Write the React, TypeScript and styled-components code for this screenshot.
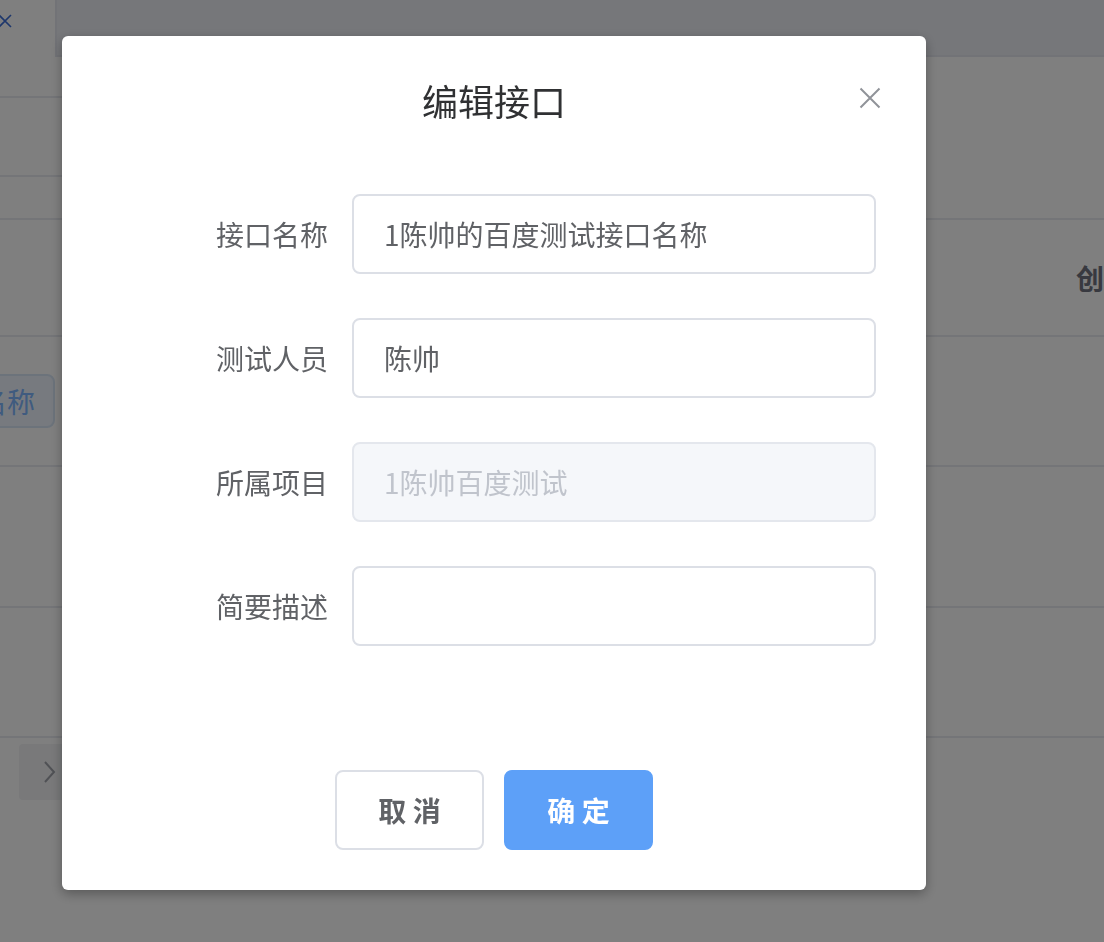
import React from 'react';
import styled, { createGlobalStyle } from 'styled-components';

const GlobalStyle = createGlobalStyle`
  html, body {
    margin: 0;
    padding: 0;
    height: 100%;
    overflow: hidden;
    background: #ffffff;
    font-family: "Noto Sans CJK SC", "Noto Sans", "Liberation Sans", sans-serif;
  }
  * { box-sizing: border-box; }
`;

/* ---------- page underneath the mask ---------- */

const Page = styled.div`
  width: 100%;
  height: 942px;
  background: #ffffff;
  overflow: hidden;
`;

const TabBar = styled.div`
  display: flex;
  height: 57px;
  background: #eceef4;
  border-bottom: 2px solid #e4e6ee;
`;

const Tab = styled.div<{ active?: boolean }>`
  width: 57px;
  height: 57px;
  display: flex;
  align-items: flex-start;
  padding-top: 14px;
  background: ${p => (p.active ? '#ffffff' : 'transparent')};
  border-right: 2px solid #e4e6ee;
  color: #3d6fd8;
`;

const FilterBlock = styled.div`
  width: 420px;
  display: flex;
  flex-direction: column;
`;

const FilterRow = styled.div<{ h: number; line?: boolean }>`
  height: ${p => p.h}px;
  border-bottom: ${p => (p.line ? '2px solid #e8eaf0' : 'none')};
`;

const TableRow = styled.div<{ h: number; top?: boolean }>`
  height: ${p => p.h}px;
  display: grid;
  grid-template-columns: 1076px 200px;
  align-items: center;
  border-top: ${p => (p.top ? '2px solid #e8eaf0' : 'none')};
  border-bottom: 2px solid #e8eaf0;
  white-space: nowrap;
`;

const HeadCell = styled.div`
  font-size: 28px;
  font-weight: 700;
  color: #707380;
`;

const RowCell = styled.div`
  display: flex;
  align-items: center;
`;

const PlainButton = styled.div`
  height: 54px;
  margin-left: -53px;
  padding: 0 18px 0 30px;
  display: flex;
  align-items: center;
  border: 2px solid #d9e6f7;
  border-radius: 8px;
  background: #eef5ff;
  color: #7eb6ff;
  font-size: 28px;
`;

const Pager = styled.div`
  display: flex;
  padding: 6px 0 0 19px;
`;

const PagerButton = styled.div`
  width: 62px;
  height: 56px;
  border-radius: 4px;
  background: #f2f3f5;
  display: flex;
  align-items: center;
  justify-content: center;
  color: #a0a3aa;
`;

/* ---------- dialog ---------- */

const Mask = styled.div`
  position: fixed;
  inset: 0;
  background: rgba(0, 0, 0, 0.5);
`;

const Dialog = styled.div`
  position: relative;
  width: 864px;
  margin: 36px 0 0 62px;
  background: #ffffff;
  border-radius: 6px;
  box-shadow: 0 4px 12px rgba(0, 0, 0, 0.3);
`;

const Header = styled.div`
  padding: 40px 40px 20px;
  text-align: center;
`;

const Title = styled.span`
  font-size: 36px;
  line-height: 48px;
  color: #303133;
`;

const CloseButton = styled.button`
  position: absolute;
  top: 51px;
  right: 45px;
  width: 22px;
  height: 22px;
  padding: 0;
  border: none;
  background: transparent;
  color: #909399;
  cursor: pointer;
  display: flex;
`;

const Body = styled.div`
  padding: 50px 0 104px 130px;
`;

const Form = styled.form`
  width: 684px;
  display: flex;
  flex-direction: column;
  gap: 44px;
`;

const FormItem = styled.div`
  display: flex;
  align-items: center;
`;

const Label = styled.label`
  width: 160px;
  padding-right: 24px;
  text-align: right;
  font-size: 28px;
  line-height: 80px;
  color: #606266;
  flex-shrink: 0;
`;

const Input = styled.input`
  flex: 1;
  height: 80px;
  padding: 0 30px;
  border: 2px solid #dcdfe6;
  border-radius: 8px;
  font-family: inherit;
  font-size: 28px;
  color: #606266;
  background: #ffffff;
  outline: none;

  &:disabled {
    background: #f5f7fa;
    border-color: #e4e7ed;
    color: #c0c4cc;
  }
`;

const Footer = styled.div`
  padding: 20px 40px 40px;
  display: flex;
  justify-content: center;
  gap: 20px;
`;

const Button = styled.button<{ primary?: boolean }>`
  width: 149px;
  height: 80px;
  padding: 0;
  border-radius: 8px;
  border: 2px solid ${p => (p.primary ? '#5da0f8' : '#dcdfe6')};
  background: ${p => (p.primary ? '#5da0f8' : '#ffffff')};
  color: ${p => (p.primary ? '#ffffff' : '#606266')};
  font-family: inherit;
  font-size: 28px;
  font-weight: 600;
  cursor: pointer;
`;

const fields = [
  { label: '接口名称', value: '1陈帅的百度测试接口名称' },
  { label: '测试人员', value: '陈帅' },
  { label: '所属项目', value: '1陈帅百度测试', disabled: true },
  { label: '简要描述', value: '' },
];

export default function App() {
  return (
    <>
      <GlobalStyle />
      <Page>
        <TabBar>
          <Tab active>
            <svg width="14" height="14" viewBox="0 0 14 14" style={{ marginLeft: -2 }}>
              <path d="M1 1 L13 13 M13 1 L1 13" stroke="currentColor" strokeWidth="1.6" fill="none" />
            </svg>
          </Tab>
        </TabBar>
        <FilterBlock>
          <FilterRow h={41} line />
          <FilterRow h={79} line />
          <FilterRow h={41} />
        </FilterBlock>
        <TableRow h={119} top>
          <div />
          <HeadCell>创建时间</HeadCell>
        </TableRow>
        <TableRow h={130}>
          <RowCell>
            <PlainButton>名称</PlainButton>
          </RowCell>
          <div />
        </TableRow>
        <TableRow h={141}>
          <div />
          <div />
        </TableRow>
        <TableRow h={130}>
          <div />
          <div />
        </TableRow>
        <Pager>
          <PagerButton>
            <svg width="62" height="56" viewBox="0 0 62 56">
              <path d="M26 18 L35 28 L26 38" stroke="currentColor" strokeWidth="2" fill="none" />
            </svg>
          </PagerButton>
        </Pager>
      </Page>

      <Mask>
        <Dialog>
          <Header>
            <Title>编辑接口</Title>
          </Header>
          <CloseButton aria-label="关闭">
            <svg width="22" height="22" viewBox="0 0 22 22">
              <path d="M1.5 1.5 L20.5 20.5 M20.5 1.5 L1.5 20.5" stroke="currentColor" strokeWidth="2" fill="none" />
            </svg>
          </CloseButton>
          <Body>
            <Form>
              {fields.map(f => (
                <FormItem key={f.label}>
                  <Label>{f.label}</Label>
                  <Input defaultValue={f.value} disabled={f.disabled} readOnly={!f.disabled} />
                </FormItem>
              ))}
            </Form>
          </Body>
          <Footer>
            <Button>取 消</Button>
            <Button primary>确 定</Button>
          </Footer>
        </Dialog>
      </Mask>
    </>
  );
}
